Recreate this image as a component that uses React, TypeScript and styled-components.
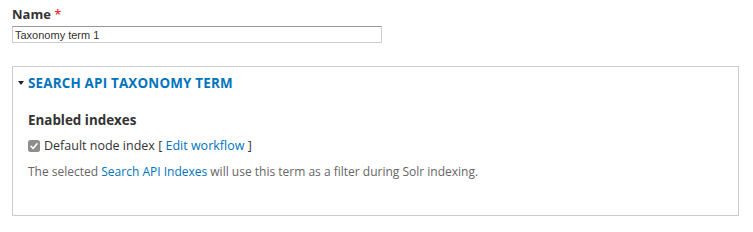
import styled, { createGlobalStyle } from "styled-components";

const GlobalStyle = createGlobalStyle`
    body {
        margin: 0;
        background: #fff;
        font-family: "Open Sans", "DejaVu Sans", sans-serif;
        color: #333;
    }
`;

const App = () => {
    return (
        <>
            <GlobalStyle />
            <Page>
                <FormItem>
                    <Label>
                        Name <Required>*</Required>
                    </Label>
                    <TextInput defaultValue="Taxonomy term 1" />
                </FormItem>

                <Fieldset>
                    <Legend>
                        <Arrow />
                        <LegendLink href="#">Search API taxonomy term</LegendLink>
                    </Legend>
                    <FieldsetBody>
                        <GroupTitle>Enabled indexes</GroupTitle>
                        <CheckRow>
                            <CheckBox>
                                <svg viewBox="0 0 12 12" width="12" height="12">
                                    <rect x="0" y="0" width="12" height="12" rx="2.5" fill="#8e8e8e" />
                                    <path d="M3 6.3 L5.1 8.4 L9 3.8" stroke="#fff" strokeWidth="1.6" fill="none" strokeLinecap="round" strokeLinejoin="round" />
                                </svg>
                            </CheckBox>
                            <span>
                                Default node index [ <Link href="#">Edit workflow</Link> ]
                            </span>
                        </CheckRow>
                        <Description>
                            The selected <Link href="#">Search API Indexes</Link> will use this term as a filter during Solr indexing.
                        </Description>
                    </FieldsetBody>
                </Fieldset>
            </Page>
        </>
    );
};
export default App;

const Page = styled.div`
    padding: 6px 14px 0 12px;
    width: 753px;
    box-sizing: border-box;
`;

const FormItem = styled.div`
    display: flex;
    flex-direction: column;
    gap: 4px;
`;

const Label = styled.label`
    font-size: 13px;
    font-weight: 700;
    color: #333;
    line-height: 16px;
`;

const Required = styled.span`
    color: #e00;
    font-weight: 400;
`;

const TextInput = styled.input`
    width: 370px;
    height: 17px;
    box-sizing: border-box;
    border: 1px solid #ccc;
    border-top-color: #999;
    padding: 0 2px;
    font-family: "Liberation Sans", Arial, sans-serif;
    font-size: 11px;
    color: #333;
    outline: none;
`;

const Fieldset = styled.div`
    margin-top: 23px;
    width: 727px;
    height: 150px;
    box-sizing: border-box;
    border: 1px solid #ccc;
    padding: 8px 14px 0 5px;
`;

const Legend = styled.div`
    display: flex;
    align-items: center;
    gap: 4px;
    height: 16px;
`;

const Arrow = styled.span`
    width: 0;
    height: 0;
    border-left: 3px solid transparent;
    border-right: 3px solid transparent;
    border-top: 4px solid #222;
`;

const LegendLink = styled.a`
    color: #0074bd;
    text-decoration: none;
    text-transform: uppercase;
    font-weight: 700;
    font-size: 13.4px;
    letter-spacing: 0.2px;
`;

const FieldsetBody = styled.div`
    padding: 21px 0 0 10px;
    display: flex;
    flex-direction: column;
`;

const GroupTitle = styled.div`
    font-size: 13.4px;
    font-weight: 700;
    line-height: 16px;
`;

const CheckRow = styled.div`
    display: flex;
    align-items: center;
    gap: 4px;
    margin-top: 10px;
    font-size: 12.5px;
    line-height: 16px;
    color: #333;
`;

const CheckBox = styled.span`
    display: flex;
    width: 12px;
    height: 12px;
`;

const Link = styled.a`
    color: #0074bd;
    text-decoration: none;
`;

const Description = styled.div`
    margin-top: 11px;
    font-size: 12px;
    line-height: 14px;
    color: #666;
`;
